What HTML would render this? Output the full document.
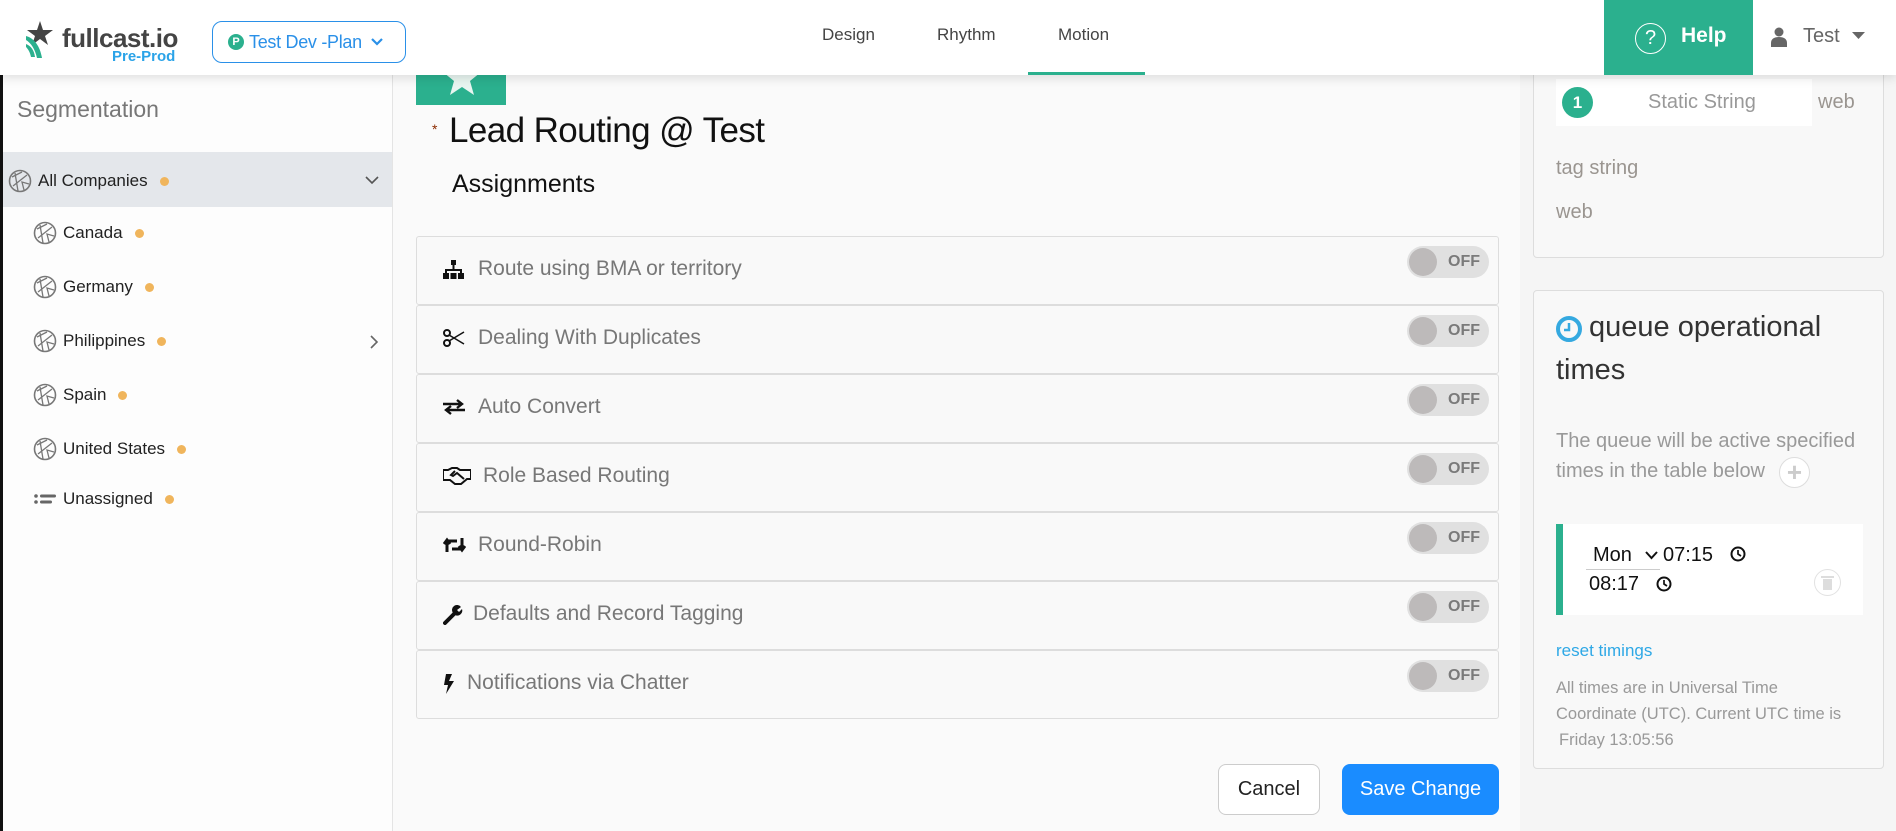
<!DOCTYPE html>
<html><head><meta charset="utf-8"><style>
*{box-sizing:border-box;margin:0;padding:0}
body{width:1896px;height:831px;overflow:hidden;background:#fafafa;font-family:"Liberation Sans",sans-serif;position:relative}
.a{position:absolute;white-space:nowrap}
.hdr{position:absolute;left:0;top:0;width:1896px;height:75px;background:#fff;box-shadow:0 3px 10px rgba(0,0,0,.12);z-index:5}
.side{position:absolute;left:0;top:75px;width:393px;height:756px;background:#fdfdfd;border-right:1px solid #e4e4e4;border-left:3px solid #111}
.si{position:absolute;left:30px;font-size:17px;color:#222;display:flex;align-items:center;gap:6px}
.dot{width:9px;height:9px;border-radius:50%;background:#f0b55c;margin-left:6px}
.row{position:absolute;left:416px;width:1083px;height:69px;border:1px solid #ddd;border-radius:3px;background:#f9f9f9}
.row .t{position:absolute;top:20px;font-size:21px;color:#777}
.row .ic{position:absolute;left:26px;top:23px}
.tg{position:absolute;left:990px;top:9px;width:82px;height:32px;border-radius:16px;background:#e0e0e0}
.tg:before{content:"";position:absolute;left:2px;top:2px;width:28px;height:28px;border-radius:50%;background:#bdbaba}
.tg span{position:absolute;left:41px;top:7px;font-size:16px;font-weight:bold;color:#7a7a7a}
.card{position:absolute;left:1533px;width:351px;border:1px solid #ddd;border-radius:4px;background:#f8f8f8}
</style></head><body>
<div class="hdr">
 <svg class="a" style="left:24px;top:20px" width="40" height="40" viewBox="0 0 40 40"><path d="M16 1l3 9 10 0-8 6 3 9-8-6-8 6 3-9-8-6 10 0z" fill="#444"/><path d="M2 16c8 2 14 10 16 22l-5 0c-2-9-6-15-11-18z" fill="#2bb08e"/><path d="M2 24c5 2 8 6 9 13l-4 0c-1-5-3-8-5-10z" fill="#2bb08e"/></svg>
 <div class="a" style="left:62px;top:23px;font-size:26px;font-weight:bold;color:#444;letter-spacing:-.5px">fullcast.io</div>
 <div class="a" style="left:112px;top:48px;font-size:15px;font-weight:bold;color:#2aa3e8">Pre-Prod</div>
 <div class="a" style="left:212px;top:21px;width:194px;height:42px;border:1.5px solid #2a90e8;border-radius:10px;background:#fff"></div>
 <div class="a" style="left:228px;top:34px;width:16px;height:16px;border-radius:50%;background:#2bb08e;color:#fff;font-size:11px;font-weight:bold;text-align:center;line-height:16px">P</div>
 <div class="a" style="left:249px;top:32px;font-size:18px;color:#2a90e8;letter-spacing:-.3px">Test Dev -Plan</div>
 <svg class="a" style="left:371px;top:37px" width="12" height="9"><path d="M1 2l5 5 5-5" stroke="#2a90e8" stroke-width="2.2" fill="none"/></svg>
 <div class="a" style="left:822px;top:25px;font-size:17px;color:#444">Design</div>
 <div class="a" style="left:937px;top:25px;font-size:17px;color:#444">Rhythm</div>
 <div class="a" style="left:1058px;top:25px;font-size:17px;color:#444">Motion</div>
 <div class="a" style="left:1028px;top:72px;width:117px;height:3px;background:#2bb08e"></div>
 <div class="a" style="left:1604px;top:0;width:149px;height:75px;background:#2bb08e"></div>
 <div class="a" style="left:1635px;top:23px;width:31px;height:31px;border:1.5px solid #fff;border-radius:50%;color:#fff;font-size:20px;text-align:center;line-height:28px">?</div>
 <div class="a" style="left:1681px;top:24px;font-size:21px;font-weight:bold;color:#fff">Help</div>
 <svg class="a" style="left:1771px;top:27px" width="16" height="20" viewBox="0 0 16 20"><circle cx="8" cy="5" r="4.5" fill="#666"/><path d="M0 20v-4c0-4 3-6 8-6s8 2 8 6v4z" fill="#666"/></svg>
 <div class="a" style="left:1803px;top:25px;font-size:20px;color:#666">Test</div>
 <svg class="a" style="left:1852px;top:32px" width="13" height="8"><path d="M0 0h13l-6.5 7z" fill="#666"/></svg>
</div>

<div class="side">
 <div class="a" style="left:14px;top:21px;font-size:23px;color:#777">Segmentation</div>
 <div class="a" style="left:0;top:77px;width:389px;height:55px;background:#e4e7eb"></div>
 <div class="si" style="left:5px;top:94px"><svg width="24" height="24" viewBox="0 0 24 24"><circle cx="12" cy="12" r="10.5" stroke="#777" stroke-width="1.6" fill="none"/><path d="M4 8l10-5M5 17l14-11M10 22l-3-18M16 21l-2-8 7 2" stroke="#777" stroke-width="1.3" fill="none"/></svg>All Companies<span class="dot"></span></div>
 <svg class="a" style="left:362px;top:101px" width="14" height="9"><path d="M1 1l6 6 6-6" stroke="#555" stroke-width="1.6" fill="none"/></svg>
 <div class="si" style="top:146px"><svg width="24" height="24" viewBox="0 0 24 24"><circle cx="12" cy="12" r="10.5" stroke="#777" stroke-width="1.6" fill="none"/><path d="M4 8l10-5M5 17l14-11M10 22l-3-18M16 21l-2-8 7 2" stroke="#777" stroke-width="1.3" fill="none"/></svg>Canada<span class="dot"></span></div>
 <div class="si" style="top:200px"><svg width="24" height="24" viewBox="0 0 24 24"><circle cx="12" cy="12" r="10.5" stroke="#777" stroke-width="1.6" fill="none"/><path d="M4 8l10-5M5 17l14-11M10 22l-3-18M16 21l-2-8 7 2" stroke="#777" stroke-width="1.3" fill="none"/></svg>Germany<span class="dot"></span></div>
 <div class="si" style="top:254px"><svg width="24" height="24" viewBox="0 0 24 24"><circle cx="12" cy="12" r="10.5" stroke="#777" stroke-width="1.6" fill="none"/><path d="M4 8l10-5M5 17l14-11M10 22l-3-18M16 21l-2-8 7 2" stroke="#777" stroke-width="1.3" fill="none"/></svg>Philippines<span class="dot"></span></div>
 <svg class="a" style="left:367px;top:260px" width="9" height="14"><path d="M1 1l6 6-6 6" stroke="#666" stroke-width="1.6" fill="none"/></svg>
 <div class="si" style="top:308px"><svg width="24" height="24" viewBox="0 0 24 24"><circle cx="12" cy="12" r="10.5" stroke="#777" stroke-width="1.6" fill="none"/><path d="M4 8l10-5M5 17l14-11M10 22l-3-18M16 21l-2-8 7 2" stroke="#777" stroke-width="1.3" fill="none"/></svg>Spain<span class="dot"></span></div>
 <div class="si" style="top:362px"><svg width="24" height="24" viewBox="0 0 24 24"><circle cx="12" cy="12" r="10.5" stroke="#777" stroke-width="1.6" fill="none"/><path d="M4 8l10-5M5 17l14-11M10 22l-3-18M16 21l-2-8 7 2" stroke="#777" stroke-width="1.3" fill="none"/></svg>United States<span class="dot"></span></div>
 <div class="si" style="top:412px"><svg width="24" height="24" viewBox="0 0 24 24"><circle cx="3" cy="9" r="1.8" fill="#666"/><circle cx="3" cy="15" r="1.8" fill="#666"/><rect x="7" y="7.5" width="16" height="3" rx="1.5" fill="#666"/><rect x="7" y="13.5" width="12" height="3" rx="1.5" fill="#666"/></svg>Unassigned<span class="dot"></span></div>
</div>

<div class="a" style="left:416px;top:75px;width:90px;height:30px;background:#2bb08e;overflow:hidden"><svg style="position:absolute;left:26px;top:-16px" width="40" height="40" viewBox="0 0 40 40"><path d="M20 0l5 13 14 0-11 9 4 14-12-8-12 8 4-14-11-9 14 0z" fill="#e8f5f0"/></svg></div>
<div class="a" style="left:432px;top:121px;font-size:14px;color:#8b2b00">*</div>
<div class="a" style="left:449px;top:111px;font-size:35px;color:#111;letter-spacing:-.6px">Lead Routing @ Test</div>
<div class="a" style="left:452px;top:170px;font-size:25px;color:#111">Assignments</div>

<div class="row" style="top:236px"><svg class="ic" width="21" height="20" viewBox="0 0 21 20"><rect x="8" y="0" width="5" height="5" fill="#111"/><path d="M10.5 5v5M3 14v-4h15v4" stroke="#111" stroke-width="2" fill="none"/><rect x="0" y="13" width="6" height="6" fill="#111"/><rect x="7.5" y="13" width="6" height="6" fill="#111"/><rect x="15" y="13" width="6" height="6" fill="#111"/></svg><div class="t" style="left:61px">Route using BMA or territory</div><div class="tg"><span>OFF</span></div></div>
<div class="row" style="top:305px"><svg class="ic" width="22" height="18" viewBox="0 0 22 18"><circle cx="4" cy="4" r="3" stroke="#111" stroke-width="2" fill="none"/><circle cx="4" cy="14" r="3" stroke="#111" stroke-width="2" fill="none"/><path d="M6 6l15 9M6 12l15-9" stroke="#111" stroke-width="1.5"/></svg><div class="t" style="left:61px">Dealing With Duplicates</div><div class="tg"><span>OFF</span></div></div>
<div class="row" style="top:374px"><svg class="ic" width="22" height="18" viewBox="0 0 22 18"><path d="M0 6h18M14 2l5 4-5 4M22 12H4M8 8l-5 4 5 4" stroke="#111" stroke-width="2.4" fill="none"/></svg><div class="t" style="left:61px">Auto Convert</div><div class="tg"><span>OFF</span></div></div>
<div class="row" style="top:443px"><svg class="ic" width="28" height="18" viewBox="0 0 28 18"><path d="M0 3h5l4-2h5l3 2h6l5 0v9h-4l-6 5h-6l-5-4H0z" stroke="#111" stroke-width="2" fill="none"/><path d="M12 4l-4 4 2 1 4-3 7 6" stroke="#111" stroke-width="2" fill="none"/></svg><div class="t" style="left:66px">Role Based Routing</div><div class="tg"><span>OFF</span></div></div>
<div class="row" style="top:512px"><svg class="ic" width="23" height="18" viewBox="0 0 23 18"><path d="M4 16V5h10M1 8l3-4 3 4M19 2v11H9M16 10l3 4 3-4" stroke="#111" stroke-width="3" fill="none"/></svg><div class="t" style="left:61px">Round-Robin</div><div class="tg"><span>OFF</span></div></div>
<div class="row" style="top:581px"><svg class="ic" width="20" height="20" viewBox="0 0 20 20"><path d="M2 18l9-9" stroke="#111" stroke-width="4" stroke-linecap="round"/><path d="M10 8a5 5 0 0 1 8-6l-4 3 2 2 3-3a5 5 0 0 1-7 6z" fill="#111"/></svg><div class="t" style="left:56px">Defaults and Record Tagging</div><div class="tg"><span>OFF</span></div></div>
<div class="row" style="top:650px"><svg class="ic" width="12" height="20" viewBox="0 0 12 20"><path d="M3 0h6L6 7h5L3 20l2-9H1z" fill="#111"/></svg><div class="t" style="left:50px">Notifications via Chatter</div><div class="tg"><span>OFF</span></div></div>

<div class="a" style="left:1218px;top:764px;width:102px;height:51px;border:1px solid #ccc;border-radius:8px;background:#fff;font-size:20px;color:#222;text-align:center;line-height:49px">Cancel</div>
<div class="a" style="left:1342px;top:764px;width:157px;height:51px;border-radius:8px;background:#1a8cff;font-size:20px;color:#fff;text-align:center;line-height:51px">Save Change</div>

<div class="a" style="left:1520px;top:75px;width:376px;height:756px;background:#f5f5f5"></div>
<div class="card" style="top:60px;height:198px"></div>
<div class="a" style="left:1556px;top:79px;width:256px;height:47px;background:#fff"></div>
<div class="a" style="left:1562px;top:87px;width:31px;height:31px;border-radius:50%;background:#2bb08e;color:#fff;font-weight:bold;font-size:17px;text-align:center;line-height:31px">1</div>
<div class="a" style="left:1648px;top:91px;font-size:20px;color:#999">Static String</div>
<div class="a" style="left:1818px;top:91px;font-size:20px;color:#9a9590">web</div>
<div class="a" style="left:1556px;top:157px;font-size:20px;color:#9a9590">tag string</div>
<div class="a" style="left:1556px;top:201px;font-size:20px;color:#9a9590">web</div>

<div class="card" style="top:290px;height:479px"></div>
<svg class="a" style="left:1556px;top:316px" width="26" height="26" viewBox="0 0 26 26"><circle cx="13" cy="13" r="11" stroke="#35a9e0" stroke-width="4" fill="none"/><path d="M13 7v7h-5" stroke="#35a9e0" stroke-width="2.5" fill="none"/></svg>
<div class="a" style="left:1589px;top:311px;font-size:29px;color:#333">queue operational</div>
<div class="a" style="left:1556px;top:354px;font-size:29px;color:#333">times</div>
<div class="a" style="left:1556px;top:430px;font-size:20px;color:#999">The queue will be active specified</div>
<div class="a" style="left:1556px;top:460px;font-size:20px;color:#999">times in the table below</div>
<div class="a" style="left:1779px;top:457px;width:31px;height:31px;border:1.5px solid #ddd;border-radius:50%;background:#fff;color:#ccc;font-size:26px;font-weight:bold;text-align:center;line-height:28px">+</div>
<div class="a" style="left:1556px;top:524px;width:307px;height:91px;background:#fff;border-left:7px solid #2bb08e"></div>
<div class="a" style="left:1593px;top:544px;font-size:20px;color:#111">Mon</div>
<svg class="a" style="left:1645px;top:551px" width="13" height="9"><path d="M1 1l5.5 6 5.5-6" stroke="#111" stroke-width="2" fill="none"/></svg>
<div class="a" style="left:1586px;top:569px;width:74px;height:1px;background:#ccc"></div>
<div class="a" style="left:1663px;top:544px;font-size:20px;color:#111">07:15</div>
<svg class="a" style="left:1730px;top:546px" width="16" height="16"><circle cx="8" cy="8" r="6.5" stroke="#111" stroke-width="2" fill="none"/><path d="M8 4v4l3 2" stroke="#111" stroke-width="1.7" fill="none"/></svg>
<div class="a" style="left:1589px;top:573px;font-size:20px;color:#111">08:17</div>
<svg class="a" style="left:1656px;top:576px" width="16" height="16"><circle cx="8" cy="8" r="6.5" stroke="#111" stroke-width="2" fill="none"/><path d="M8 4v4l3 2" stroke="#111" stroke-width="1.7" fill="none"/></svg>
<div class="a" style="left:1814px;top:569px;width:27px;height:27px;border:1.5px solid #e2e2e2;border-radius:50%"></div>
<svg class="a" style="left:1821px;top:575px" width="13" height="15"><rect x="0" y="1" width="13" height="2" fill="#ddd"/><rect x="2" y="4" width="9" height="11" fill="#ddd"/></svg>
<div class="a" style="left:1556px;top:641px;font-size:17px;color:#2ea8e6">reset timings</div>
<div class="a" style="left:1556px;top:679px;font-size:16.5px;color:#999">All times are in Universal Time</div>
<div class="a" style="left:1556px;top:705px;font-size:16.5px;color:#999">Coordinate (UTC). Current UTC time is</div>
<div class="a" style="left:1559px;top:731px;font-size:16.5px;color:#999">Friday 13:05:56</div>
</body></html>
